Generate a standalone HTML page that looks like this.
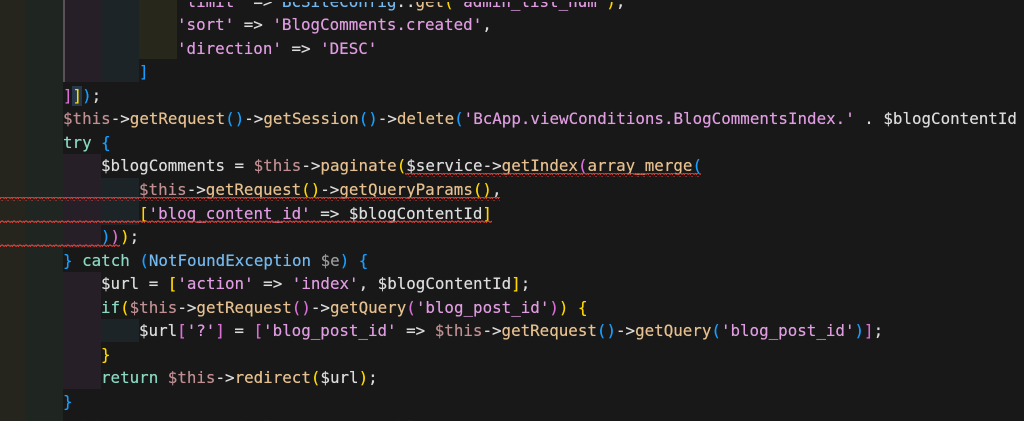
<!DOCTYPE html>
<html><head><meta charset="utf-8"><style>
html,body{margin:0;padding:0;width:1024px;height:421px;overflow:hidden;background:#181818}
.g1{position:absolute;left:0;top:0;width:25px;height:421px;background:#25251d}
.g2{position:absolute;left:25px;top:0;width:38px;height:421px;background:#1f2520}
.ib{position:absolute;height:23.55px}
.P{background:#261f27}.T{background:#1d2428}.O{background:#28271c}
.w{position:absolute;left:0;top:1.5px;width:1024px;height:419.5px;overflow:hidden}
.r{position:absolute;left:63px;white-space:pre;font-family:"DejaVu Sans Mono","Liberation Mono",monospace;font-size:15.85px;line-height:23.55px;height:23.55px;color:#dcdcdc;text-shadow:0 0 0.4px currentColor}
.v{color:#bf8f92}.f{color:#e6c08f}.s{color:#df9ce0}.k{color:#8ad8c2}.c{color:#74b8ee}.e{color:#9a9a9a}
.y{color:#ffd700}.p{color:#da70d6}.b{color:#179fff}
</style></head><body>
<div class="g1"></div><div class="g2"></div>
<div class="ib P" style="left:63px;top:0;width:38px;height:82px"></div>
<div class="ib T" style="left:101px;top:0;width:38px;height:82px"></div>
<div class="ib O" style="left:139px;top:0;width:38px;height:59px"></div>
<div style="position:absolute;left:63px;top:0;width:2px;height:82px;background:#5a5058"></div>
<div class="ib P" style="left:63px;top:154px;width:38px;height:94.2px"></div>
<div class="ib T" style="left:101px;top:177.5px;width:38px;height:47.1px"></div>
<div class="ib P" style="left:63px;top:271.7px;width:38px;height:117.8px"></div>
<div class="ib T" style="left:101px;top:318.8px;width:38px;height:23.55px"></div>
<div style="position:absolute;left:72px;top:86px;width:10px;height:20px;background:#26384a"></div>
<div class="w">
<div class="r" style="top:-12px;left:177px"><span class="s">'limit'</span> =&gt; <span class="c">BcSiteConfig</span>::<span class="f">get</span><span class="y">(</span><span class="s">'admin_list_num'</span><span class="y">)</span>,</div>
<div class="r" style="top:11.5px;left:177px"><span class="s">'sort'</span> =&gt; <span class="s">'BlogComments.created'</span>,</div>
<div class="r" style="top:35.1px;left:177px"><span class="s">'direction'</span> =&gt; <span class="s">'DESC'</span></div>
<div class="r" style="top:58.6px;left:139px"><span class="b">]</span></div>
<div class="r" style="top:82.2px"><span class="p">]</span><span class="y">]</span><span class="b">)</span>;</div>
<div class="r" style="top:105.8px"><span class="v">$this</span>-&gt;<span class="f">getRequest</span><span class="b">()</span>-&gt;<span class="f">getSession</span><span class="b">()</span>-&gt;<span class="f">delete</span><span class="b">(</span><span class="s">'BcApp.viewConditions.BlogCommentsIndex.'</span> . $blogContentId</div>
<div class="r" style="top:129.3px"><span class="k">try</span> <span class="b">{</span></div>
<div class="r" style="top:152.9px;left:101px">$blogComments = <span class="v">$this</span>-&gt;<span class="f">paginate</span><span class="y">(</span>$service-&gt;<span class="f">getIndex</span><span class="p">(</span><span class="f">array_merge</span><span class="b">(</span></div>
<div class="r" style="top:176.4px;left:139px"><span class="v">$this</span>-&gt;<span class="f">getRequest</span><span class="y">()</span>-&gt;<span class="f">getQueryParams</span><span class="y">()</span>,</div>
<div class="r" style="top:200px;left:139px"><span class="y">[</span><span class="s">'blog_content_id'</span> =&gt; $blogContentId<span class="y">]</span></div>
<div class="r" style="top:223.6px;left:101px"><span class="b">)</span><span class="p">)</span><span class="y">)</span>;</div>
<div class="r" style="top:247.1px"><span class="b">}</span> <span class="k">catch</span> <span class="b">(</span><span class="c">NotFoundException</span> <span class="e">$e</span><span class="b">)</span> <span class="b">{</span></div>
<div class="r" style="top:270.7px;left:101px">$url = <span class="y">[</span><span class="s">'action'</span> =&gt; <span class="s">'index'</span>, $blogContentId<span class="y">]</span>;</div>
<div class="r" style="top:294.2px;left:101px"><span class="k">if</span><span class="y">(</span><span class="v">$this</span>-&gt;<span class="f">getRequest</span><span class="p">()</span>-&gt;<span class="f">getQuery</span><span class="p">(</span><span class="s">'blog_post_id'</span><span class="p">)</span><span class="y">)</span> <span class="y">{</span></div>
<div class="r" style="top:317.8px;left:139px">$url<span class="p">[</span><span class="s">'?'</span><span class="p">]</span> = <span class="p">[</span><span class="s">'blog_post_id'</span> =&gt; <span class="v">$this</span>-&gt;<span class="f">getRequest</span><span class="b">()</span>-&gt;<span class="f">getQuery</span><span class="b">(</span><span class="s">'blog_post_id'</span><span class="b">)</span><span class="p">]</span>;</div>
<div class="r" style="top:341.4px;left:101px"><span class="y">}</span></div>
<div class="r" style="top:364.9px;left:101px"><span class="k">return</span> <span class="v">$this</span>-&gt;<span class="f">redirect</span><span class="y">(</span>$url<span class="y">)</span>;</div>
<div class="r" style="top:388.5px"><span class="b">}</span></div>
<div class="r" style="top:414px"><span class="v">$this</span>-&gt;<span class="f">set</span><span class="b">(</span><span class="f">compact</span><span class="p">(</span><span class="s">'blogContent'</span>, <span class="s">'blogComments'</span><span class="p">)</span><span class="b">)</span>;</div>
</div>
<svg width="1024" height="421" style="position:absolute;left:0;top:0">
<defs><pattern id="w" width="6" height="4" patternUnits="userSpaceOnUse"><path d="M0 3 Q1.5 0 3 1.5 T6 1" stroke="#e0463f" stroke-width="1.2" fill="none"/></pattern></defs>
<rect x="405" y="173" width="296" height="4" fill="url(#w)"/>
<rect x="0" y="197" width="500" height="4" fill="url(#w)"/>
<rect x="0" y="220" width="492" height="4" fill="url(#w)"/>
<rect x="0" y="243" width="120" height="4" fill="url(#w)"/>
</svg>
</body></html>
